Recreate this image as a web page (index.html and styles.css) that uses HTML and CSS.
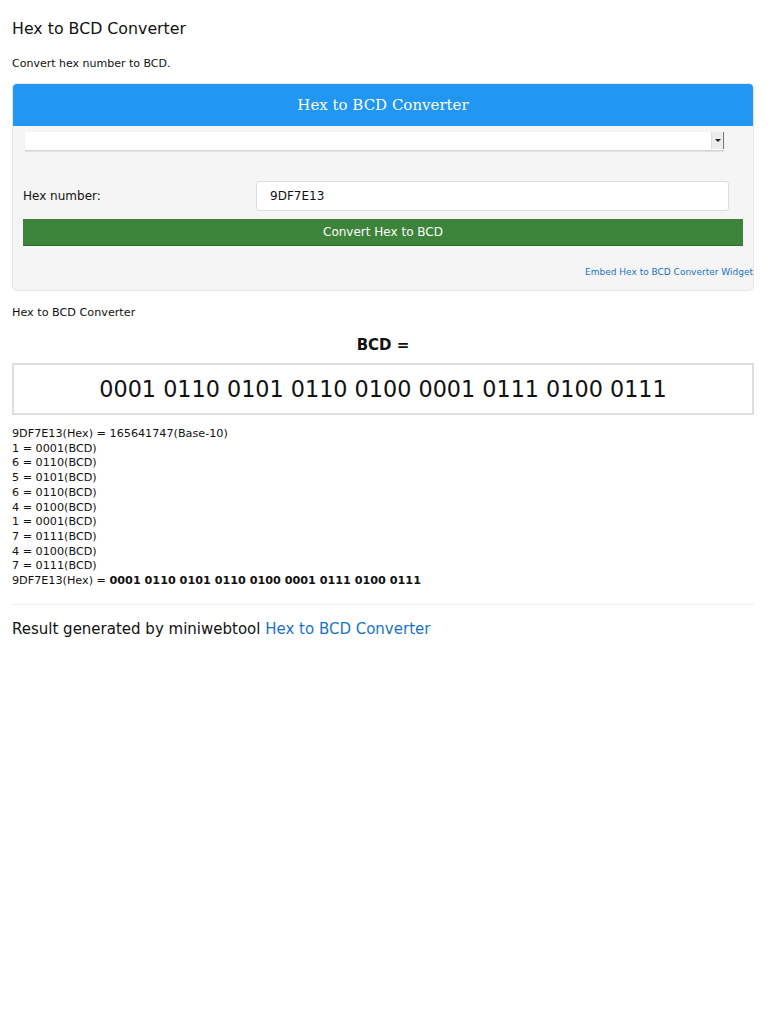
FILE: index.html
```html
<!DOCTYPE html>
<html lang="en">
<head>
    <meta charset="UTF-8">
    <meta name="viewport" content="width=device-width, initial-scale=1.0">
    <title>Hex to BCD Converter</title>
    <link rel="stylesheet" href="styles.css">
</head>
<body>
    <div class="page">
        <h1 class="page-title">Hex to BCD Converter</h1>
        <p class="intro">Convert hex number to BCD.</p>

        <div class="tool-card">
            <div class="tool-head">Hex to BCD Converter</div>
            <div class="tool-body">
                <div class="select-row">
                    <div class="fake-select">
                        <span class="select-btn"><span class="arrow"></span></span>
                    </div>
                </div>
                <div class="field-row">
                    <label class="field-label" for="hex">Hex number:</label>
                    <input class="field-input" type="text" id="hex" value="9DF7E13">
                </div>
                <button class="convert-btn">Convert Hex to BCD</button>
                <div class="embed-row">
                    <a class="embed-link" href="#">Embed Hex to BCD Converter Widget</a>
                </div>
            </div>
        </div>

        <p class="sub-title">Hex to BCD Converter</p>
        <h2 class="result-label">BCD =</h2>
        <div class="result-box">0001 0110 0101 0110 0100 0001 0111 0100 0111</div>

        <div class="steps">
            9DF7E13(Hex) = 165641747(Base-10)<br>
            1 = 0001(BCD)<br>
            6 = 0110(BCD)<br>
            5 = 0101(BCD)<br>
            6 = 0110(BCD)<br>
            4 = 0100(BCD)<br>
            1 = 0001(BCD)<br>
            7 = 0111(BCD)<br>
            4 = 0100(BCD)<br>
            7 = 0111(BCD)<br>
            9DF7E13(Hex) = <b>0001 0110 0101 0110 0100 0001 0111 0100 0111</b>
        </div>

        <hr class="divider">

        <p class="credit">Result generated by miniwebtool <a href="#">Hex to BCD Converter</a></p>
    </div>
</body>
</html>
```

FILE: styles.css
```css
body {
    margin: 0;
    font-family: 'DejaVu Sans', sans-serif;
    color: #111;
    background: #fff;
}
.page {
    padding: 0 14px 0 12px;
}
.page-title {
    font-size: 15.8px;
    font-weight: normal;
    margin: 0;
    padding-top: 19px;
    line-height: 19px;
}
.intro {
    font-size: 11px;
    margin: 19px 0 0 0;
    line-height: 14px;
}
.tool-card {
    margin-top: 12px;
    border: 1px solid #e6e6e6;
    border-radius: 5px;
    background: #f5f5f5;
    overflow: hidden;
}
.tool-head {
    background: #2196f3;
    color: #fff;
    font-family: 'DejaVu Serif', serif;
    font-size: 15px;
    text-align: center;
    height: 42px;
    line-height: 42px;
}
.tool-body {
    padding: 6px 10px 12px 10px;
}
.select-row {
    padding: 0 19px 0 2px;
}
.fake-select {
    height: 18px;
    background: #fff;
    border-bottom: 1px solid #d4d4d4;
    box-shadow: 0 1px 1px rgba(0, 0, 0, 0.08);
    display: flex;
    justify-content: flex-end;
}
.select-btn {
    width: 11px;
    height: 17px;
    background: #ececec;
    border-left: 1px solid #ddd;
    border-right: 1px solid #777;
    display: flex;
    align-items: center;
    justify-content: center;
}
.arrow {
    width: 0;
    height: 0;
    border-left: 3px solid transparent;
    border-right: 3px solid transparent;
    border-top: 3px solid #222;
}
.field-row {
    display: flex;
    align-items: center;
    margin-top: 30px;
    padding-right: 14px;
}
.field-label {
    font-size: 12px;
    width: 233px;
}
.field-input {
    flex: 1;
    height: 30px;
    box-sizing: border-box;
    border: 1px solid #dcdcdc;
    border-radius: 3px;
    background: #fff;
    font-family: 'DejaVu Sans', sans-serif;
    font-size: 12px;
    color: #111;
    padding: 0 13px;
    outline: none;
}
.convert-btn {
    display: block;
    width: 100%;
    margin-top: 8px;
    height: 27px;
    background: #3c8439;
    border: none;
    border-bottom: 1px solid #2e6b2c;
    color: #fff;
    font-family: 'DejaVu Sans', sans-serif;
    font-size: 12px;
}
.embed-row {
    text-align: right;
    margin-top: 18px;
    margin-right: -10px;
    line-height: 12px;
}
.embed-link {
    font-size: 9px;
    color: #1a73c8;
    text-decoration: none;
}
.sub-title {
    font-size: 11.2px;
    margin: 15px 0 0 0;
    line-height: 14px;
}
.result-label {
    font-size: 15px;
    font-weight: bold;
    text-align: center;
    margin: 16px 0 0 0;
    line-height: 18px;
}
.result-box {
    margin-top: 9px;
    border: 2px solid #dedede;
    height: 48px;
    line-height: 48px;
    text-align: center;
    font-size: 22.3px;
}
.steps {
    margin-top: 12px;
    font-size: 11.2px;
    line-height: 14.7px;
}
.divider {
    border: none;
    border-top: 1px solid #eee;
    margin: 15px 0 0 0;
}
.credit {
    font-size: 15px;
    margin: 15px 0 0 0;
    line-height: 18px;
}
.credit a {
    color: #1a73c8;
    text-decoration: none;
}
```
